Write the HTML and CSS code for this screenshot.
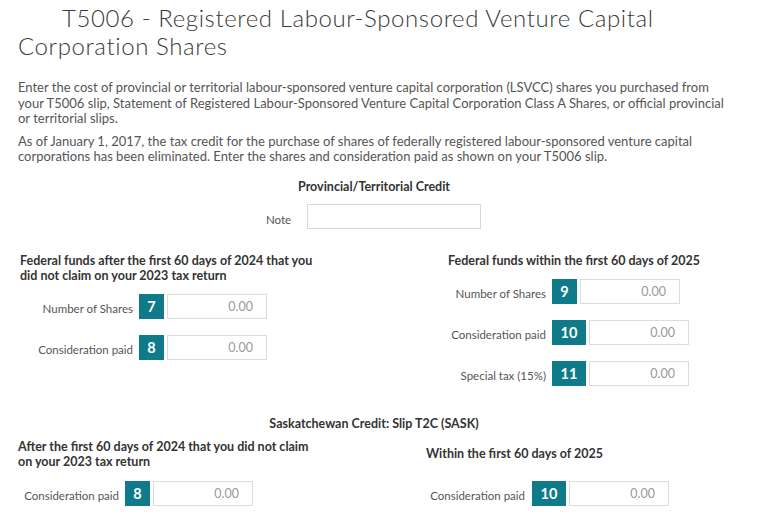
FILE: index.html
```html
<!DOCTYPE html>
<html lang="en">
<head>
  <meta charset="UTF-8">
  <meta name="viewport" content="width=device-width, initial-scale=1.0">
  <title>T5006 - Registered Labour-Sponsored Venture Capital Corporation Shares</title>
  <link rel="stylesheet" href="styles.css">
</head>
<body>
  <h1>T5006 - Registered Labour-Sponsored Venture Capital Corporation Shares</h1>

  <p>Enter the cost of provincial or territorial labour-sponsored venture capital corporation (LSVCC) shares you purchased from your T5006 slip, Statement of Registered Labour-Sponsored Venture Capital Corporation Class A Shares, or official provincial or territorial slips.</p>
  <p>As of January 1, 2017, the tax credit for the purchase of shares of federally registered labour-sponsored venture capital corporations has been eliminated. Enter the shares and consideration paid as shown on your T5006 slip.</p>

  <h2 class="section-title">Provincial/Territorial Credit</h2>
  <div class="note-row">
    <label for="note">Note</label>
    <input type="text" id="note" class="note-input">
  </div>

  <div class="federal">
    <div class="col col-left">
      <h3>Federal funds after the first 60 days of 2024 that you did not claim on your 2023 tax return</h3>
      <div class="fields fed-left">
        <div class="field-row">
          <label>Number of Shares</label>
          <span class="badge">7</span>
          <input type="text" class="amount" placeholder="0.00">
        </div>
        <div class="field-row">
          <label>Consideration paid</label>
          <span class="badge">8</span>
          <input type="text" class="amount" placeholder="0.00">
        </div>
      </div>
    </div>

    <div class="col col-right">
      <h3>Federal funds within the first 60 days of 2025</h3>
      <div class="fields fed-right">
        <div class="field-row">
          <label>Number of Shares</label>
          <span class="badge">9</span>
          <input type="text" class="amount" placeholder="0.00">
        </div>
        <div class="field-row">
          <label>Consideration paid</label>
          <span class="badge wide">10</span>
          <input type="text" class="amount" placeholder="0.00">
        </div>
        <div class="field-row">
          <label>Special tax (15%)</label>
          <span class="badge wide">11</span>
          <input type="text" class="amount" placeholder="0.00">
        </div>
      </div>
    </div>
  </div>

  <h2 class="section-title sask-title">Saskatchewan Credit: Slip T2C (SASK)</h2>
  <div class="sask">
    <h3 class="sask-left-head">After the first 60 days of 2024 that you did not claim on your 2023 tax return</h3>
    <h3 class="sask-right-head">Within the first 60 days of 2025</h3>

    <div class="fields sask-left">
      <div class="field-row">
        <label>Consideration paid</label>
        <span class="badge">8</span>
        <input type="text" class="amount" placeholder="0.00">
      </div>
    </div>
    <div class="fields sask-right">
      <div class="field-row">
        <label>Consideration paid</label>
        <span class="badge wide">10</span>
        <input type="text" class="amount" placeholder="0.00">
      </div>
    </div>
  </div>
</body>
</html>
```

FILE: styles.css
```css
body {
  font-family: Lato, "Open Sans", sans-serif;
  margin: 0;
  padding: 0 18px;
  color: #4f4f4f;
  background: #fff;
}

h1 {
  font-weight: 300;
  font-size: 24px;
  line-height: 28px;
  letter-spacing: 0.6px;
  margin: 4px 0 20px;
  text-indent: 44px;
  color: #3a3a3a;
}

p {
  font-size: 13px;
  line-height: 15.5px;
  margin: 0 25px 7px 0;
  color: #555;
}

.section-title {
  font-size: 12.5px;
  font-weight: bold;
  text-align: center;
  color: #333;
  margin: 14px 20px 10px 0;
}

.note-row {
  display: flex;
  align-items: center;
  margin-left: 248px;
  margin-top: 9px;
  gap: 16px;
}
.note-row label {
  font-size: 11.5px;
  color: #555;
  padding-top: 6px;
}
.note-input {
  width: 174px;
  height: 25px;
  box-sizing: border-box;
  border: 1px solid #d8d8d8;
}

h3 {
  font-size: 12.5px;
  font-weight: bold;
  line-height: 15px;
  color: #333;
  margin: 0;
}

.federal {
  display: grid;
  grid-template-columns: 420px 1fr;
  margin-top: 24px;
}
.col-left h3 {
  padding-left: 2px;
  width: 310px;
}
.col-right {
  padding-left: 10px;
}

.fields {
  display: flex;
  flex-direction: column;
  gap: 16px;
  margin-top: 11px;
}
.field-row {
  display: flex;
  align-items: center;
}
.field-row label {
  font-size: 11.5px;
  color: #555;
  text-align: right;
  margin-right: 6px;
  padding-top: 5px;
  flex: none;
}
.badge {
  display: inline-flex;
  align-items: center;
  justify-content: center;
  background: #0f7a8a;
  color: #fff;
  font-weight: bold;
  font-size: 14.5px;
  width: 25px;
  height: 25px;
}
.badge.wide {
  width: 34px;
}
.amount {
  width: 100px;
  height: 25px;
  box-sizing: border-box;
  margin-left: 3px;
  border: 1px solid #dcdcdc;
  text-align: right;
  padding: 0 13px 0 4px;
  font-family: inherit;
  font-size: 12.5px;
}
.amount::placeholder {
  color: #999;
}

.fed-left label {
  width: 115px;
}
.fed-right label {
  width: 98px;
}

.sask-title {
  margin-top: 30px;
  margin-bottom: 8px;
}
.sask {
  display: grid;
  grid-template-columns: 408px 1fr;
  align-items: center;
}
.sask-left-head {
  width: 305px;
}
.sask .fields {
  margin-top: 12px;
}
.sask-left label {
  width: 101px;
}
.sask-right label {
  width: 99px;
  margin-right: 7px;
}
```
